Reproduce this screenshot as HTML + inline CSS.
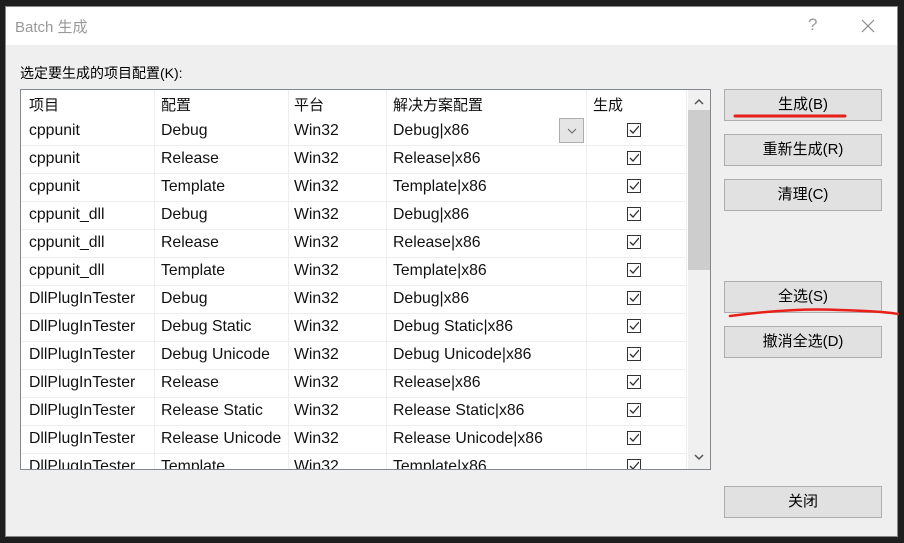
<!DOCTYPE html>
<html><head><meta charset="utf-8"><style>
body{margin:0;width:904px;height:543px;background:#1e1e1e;position:relative;overflow:hidden;font-family:"Liberation Sans","Noto Sans CJK SC",sans-serif;}
.dlg{position:absolute;left:5px;top:6px;width:893px;height:531px;background:#efefef;border:1px solid #888;box-sizing:border-box}
.title{position:absolute;left:0;top:0;right:0;height:38px;background:#fff}
.title span{position:absolute;left:9px;top:9px;font-size:15px;color:#999}
.lbl{position:absolute;left:14px;top:56px;font-size:14px;color:#000}
.list{position:absolute;left:14px;top:82px;width:691px;height:381px;background:#fff;border:1px solid #828790;box-sizing:border-box;overflow:hidden}
.row{position:absolute;left:0;height:28px;width:666px;font-size:15.8px;color:#111;border-bottom:1px solid #eee;box-sizing:border-box}
.hdr{font-size:15px}
.row div{position:absolute;top:4px}
.sep{position:absolute;top:0;width:1px;height:381px;background:#eee}
.cb{position:absolute;left:606px;top:5px;width:14px;height:14px;border:1px solid #333;box-sizing:border-box}
.cb svg{position:absolute;left:1px;top:1px}
.sb{position:absolute;left:667px;top:0;width:22px;height:379px;background:#f0f0f0}
.btn{position:absolute;left:718px;width:158px;height:32px;background:#e1e1e1;border:1px solid #adadad;box-sizing:border-box;font-size:15px;text-align:center;line-height:30px;color:#000}
</style></head><body>
<div class="dlg">
<div class="title"><span>Batch 生成</span>
<span style="left:802px;top:8px;font-size:17px">?</span>
<svg style="position:absolute;left:855px;top:12px" width="14" height="14"><path d="M1 1L13 13M13 1L1 13" stroke="#888" stroke-width="1.2"/></svg></div>
<div class="lbl">选定要生成的项目配置(K):</div>
<div class="list">
<div class="sep" style="left:133px"></div><div class="sep" style="left:267px"></div><div class="sep" style="left:365px"></div><div class="sep" style="left:565px"></div><div class="sep" style="left:665px"></div>
<div class="row hdr" style="top:0;border:none"><div style="left:8px">项目</div><div style="left:140px">配置</div><div style="left:273px">平台</div><div style="left:372px">解决方案配置</div><div style="left:572px">生成</div></div>
<div id="rows"></div>
<div class="sb"><div style="position:absolute;left:0;top:20px;width:22px;height:160px;background:#cdcdcd"></div>
<svg style="position:absolute;left:6px;top:8px" width="10" height="7"><path d="M1 6L5 2L9 6" stroke="#555" fill="none" stroke-width="1.5"/></svg>
<svg style="position:absolute;left:6px;top:364px" width="10" height="7"><path d="M1 1L5 5L9 1" stroke="#555" fill="none" stroke-width="1.5"/></svg></div>
</div>
<div class="btn" style="top:82px">生成(B)</div>
<div class="btn" style="top:127px">重新生成(R)</div>
<div class="btn" style="top:172px">清理(C)</div>
<div class="btn" style="top:274px">全选(S)</div>
<div class="btn" style="top:319px">撤消全选(D)</div>
<div class="btn" style="top:479px">关闭</div>
</div>
<svg style="position:absolute;left:0;top:0" width="904" height="543"><path d="M735 116L845 116" stroke="#e8201a" stroke-width="3" stroke-linecap="round"/><path d="M730 316C760 312 800 308 840 310C870 311 888 312 898 314" stroke="#e8201a" stroke-width="2.5" fill="none" stroke-linecap="round"/></svg>
<script>
var d=[["cppunit","Debug","Debug|x86"],["cppunit","Release","Release|x86"],["cppunit","Template","Template|x86"],["cppunit_dll","Debug","Debug|x86"],["cppunit_dll","Release","Release|x86"],["cppunit_dll","Template","Template|x86"],["DllPlugInTester","Debug","Debug|x86"],["DllPlugInTester","Debug Static","Debug Static|x86"],["DllPlugInTester","Debug Unicode","Debug Unicode|x86"],["DllPlugInTester","Release","Release|x86"],["DllPlugInTester","Release Static","Release Static|x86"],["DllPlugInTester","Release Unicode","Release Unicode|x86"],["DllPlugInTester","Template","Template|x86"]];
var h="";d.forEach(function(r,i){h+='<div class="row" style="top:'+(28+i*28)+'px"><div style="left:8px">'+r[0]+'</div><div style="left:140px">'+r[1]+'</div><div style="left:273px">Win32</div><div style="left:372px">'+r[2]+'</div>'+(i==0?'<div style="left:538px;top:0;width:25px;height:25px;background:#e5e5e5;border:1px solid #adadad;box-sizing:border-box"><svg style="position:absolute;left:7px;top:9px" width="10" height="6"><path d="M1 1L5 5L9 1" stroke="#666" fill="none"/></svg></div>':'')+'<span class="cb"><svg width="10" height="10"><path d="M1 5L4 8L10 1" stroke="#333" fill="none" stroke-width="1.3"/></svg></span></div>';});
document.getElementById("rows").outerHTML=h;
</script>
</body></html>
